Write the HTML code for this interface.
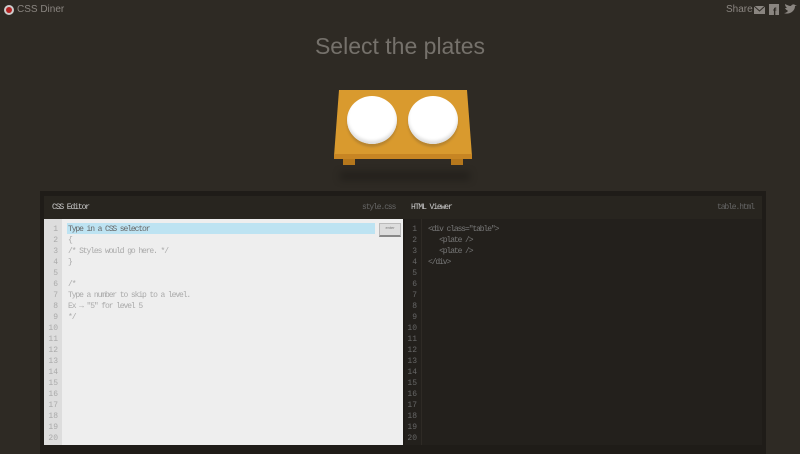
<!DOCTYPE html>
<html><head><style>
html,body{margin:0;width:800px;height:454px;overflow:hidden}
body{background:#2e2a24;font-family:"Liberation Sans",sans-serif;position:relative}
.a{position:absolute}
.mono{font-family:"Liberation Mono",monospace;font-size:8px;letter-spacing:-1.1px}
.ln{line-height:11px}
</style></head><body>
<div class="a" style="left:4px;top:5px;width:10px;height:10px;border-radius:50%;background:#ccc"></div>
<div class="a" style="left:6px;top:7px;width:6px;height:6px;border-radius:50%;background:#b32222"></div>
<div class="a" style="left:17px;top:4px;font-size:10px;color:#8a8580">CSS Diner</div>
<div class="a" style="left:726px;top:4px;font-size:10px;color:#8a8580">Share</div>
<svg class="a" style="left:754px;top:4px" width="44" height="12"><rect x="0" y="2" width="11" height="8" fill="#8a8580"/><path d="M0 2 L5.5 7 L11 2" stroke="#2e2a24" fill="none"/><rect x="15" y="0" width="10" height="11" fill="#8a8580"/><text x="19" y="11" font-size="10" font-weight="bold" fill="#2e2a24" font-family="Liberation Sans">f</text><path d="M30 9 C34 11 41 8 41 2 L43 1 L41 1 C40 0 38 0 37 2 C35 2 33 1 31 0 C31 2 32 3 33 4 L31 4 C32 6 33 6 34 7 C33 8 32 9 30 9Z" fill="#8a8580"/></svg>
<div class="a" style="left:0;width:800px;top:33px;text-align:center;font-size:23px;color:#75716b">Select the plates</div>
<!-- table -->
<div class="a" style="left:340px;top:172px;width:130px;height:8px;background:rgba(0,0,0,.25);filter:blur(4px)"></div>
<div class="a" style="left:343px;top:159px;width:12px;height:6px;background:#b5771c"></div>
<div class="a" style="left:451px;top:159px;width:12px;height:6px;background:#b5771c"></div>
<svg class="a" style="left:330px;top:88px" width="146" height="75"><polygon points="9,2 137,2 142,68 4,68" fill="#d99a2e"/><rect x="4" y="66" width="138" height="5" fill="#c78523"/></svg>
<div class="a" style="left:347px;top:96px;width:50px;height:48px;border-radius:50%;background:#fff;box-shadow:0 3px 2px #b8852f,inset 0 -3px 3px #ddd"></div>
<div class="a" style="left:408px;top:96px;width:50px;height:48px;border-radius:50%;background:#fff;box-shadow:0 3px 2px #b8852f,inset 0 -3px 3px #ddd"></div>
<!-- editor -->
<div class="a" style="left:40px;top:191px;width:726px;height:263px;background:#1f1c18"></div>
<div class="a" style="left:44px;top:196px;width:718px;height:23px;background:#28251f"></div>
<div class="a mono" style="left:52px;top:203px;color:#ccc">CSS Editor</div>
<div class="a mono" style="left:362px;top:203px;color:#666">style.css</div>
<div class="a mono" style="left:411px;top:203px;color:#ccc">HTML Viewer</div>
<div class="a mono" style="left:717px;top:203px;color:#666">table.html</div>
<div class="a" style="left:44px;top:219px;width:359px;height:226px;background:#eee"></div>
<div class="a" style="left:44px;top:219px;width:18px;height:226px;background:#ddd"></div>
<div class="a" style="left:67px;top:223px;width:308px;height:11px;background:#bde3f2"></div>
<div class="a" style="left:379px;top:223px;width:20px;height:11px;background:#ddd;border:1px solid #bbb;border-bottom:2px solid #888;font-size:4px;text-align:center;color:#777;line-height:8px">enter</div>
<div class="a mono ln" style="left:44px;top:224px;width:14px;text-align:right;color:#aaa;letter-spacing:0">1<br>2<br>3<br>4<br>5<br>6<br>7<br>8<br>9<br>10<br>11<br>12<br>13<br>14<br>15<br>16<br>17<br>18<br>19<br>20</div>
<div class="a mono ln" style="left:68px;top:224px;color:#aaa;white-space:pre"><span style="color:#666">Type in a CSS selector</span>
{
/* Styles would go here. */
}

/*
Type a number to skip to a level.
Ex → "5" for level 5
*/</div>
<div class="a" style="left:405px;top:219px;width:357px;height:226px;background:#23201c"></div>
<div class="a" style="left:421px;top:219px;width:1px;height:226px;background:#2e2a25"></div>
<div class="a mono ln" style="left:405px;top:224px;width:12px;text-align:right;color:#666;letter-spacing:0">1<br>2<br>3<br>4<br>5<br>6<br>7<br>8<br>9<br>10<br>11<br>12<br>13<br>14<br>15<br>16<br>17<br>18<br>19<br>20</div>
<div class="a mono ln" style="left:428px;top:224px;color:#777;white-space:pre">&lt;div class="table"&gt;
   &lt;plate /&gt;
   &lt;plate /&gt;
&lt;/div&gt;</div>
</body></html>
